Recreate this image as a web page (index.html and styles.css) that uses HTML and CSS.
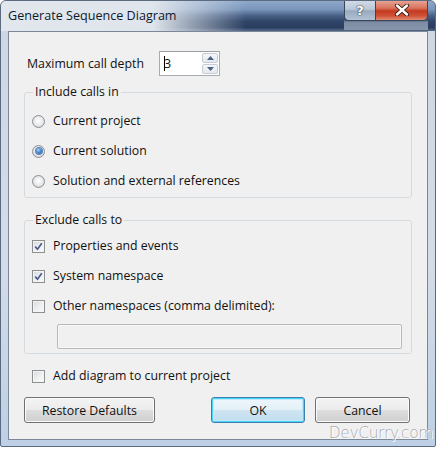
FILE: index.html
```html
<!DOCTYPE html>
<html lang="en">
<head>
<meta charset="utf-8">
<title>Generate Sequence Diagram</title>
<link rel="stylesheet" href="styles.css">
</head>
<body>
<div class="window">
  <div class="caption">
    <span class="title">Generate Sequence Diagram</span>
    <div class="caption-buttons">
      <span class="cap cap-help">?</span>
      <span class="cap cap-close">
        <svg width="16" height="12" viewBox="0 0 16 12">
          <path d="M3 1.5 L13 10.5 M13 1.5 L3 10.5" stroke="#3a1810" stroke-width="4.2" stroke-linecap="round"/>
          <path d="M3 1.5 L13 10.5 M13 1.5 L3 10.5" stroke="#ffffff" stroke-width="2.4" stroke-linecap="round"/>
        </svg>
      </span>
    </div>
  </div>
  <div class="client">
    <div class="depth-row">
      <span class="depth-label">Maximum call depth</span>
      <div class="spin">
        <span class="spin-value"><span class="caret"></span>3</span>
        <div class="spin-arrows">
          <span class="spin-btn"><svg width="7" height="4" viewBox="0 0 7 4"><path d="M0 4 L3.5 0 L7 4Z" fill="#4d6185"/></svg></span>
          <span class="spin-btn"><svg width="7" height="4" viewBox="0 0 7 4"><path d="M0 0 L3.5 4 L7 0Z" fill="#4d6185"/></svg></span>
        </div>
      </div>
    </div>

    <fieldset class="group group-include">
      <legend>Include calls in</legend>
      <div class="option"><span class="radio"></span><span>Current project</span></div>
      <div class="option"><span class="radio radio-on"></span><span>Current solution</span></div>
      <div class="option"><span class="radio"></span><span>Solution and external references</span></div>
    </fieldset>

    <fieldset class="group group-exclude">
      <legend>Exclude calls to</legend>
      <div class="option"><span class="check check-on"><svg width="9" height="9" viewBox="0 0 9 9"><path d="M1.2 4.6 L3.5 7.2 L7.8 1.2" fill="none" stroke="#4a5d8e" stroke-width="1.7"/></svg></span><span>Properties and events</span></div>
      <div class="option"><span class="check check-on"><svg width="9" height="9" viewBox="0 0 9 9"><path d="M1.2 4.6 L3.5 7.2 L7.8 1.2" fill="none" stroke="#4a5d8e" stroke-width="1.7"/></svg></span><span>System namespace</span></div>
      <div class="option"><span class="check"></span><span>Other namespaces (comma delimited):</span></div>
      <div class="namespaces-box"></div>
    </fieldset>

    <div class="option option-add"><span class="check"></span><span>Add diagram to current project</span></div>

    <div class="button-row">
      <span class="btn btn-restore">Restore Defaults</span>
      <span class="btn btn-default">OK</span>
      <span class="btn">Cancel</span>
    </div>
  </div>
  <span class="watermark">DevCurry.com</span>
</div>
</body>
</html>
```

FILE: styles.css
```css
* { box-sizing: border-box; }

html, body {
  margin: 0;
  padding: 0;
  background: #ffffff;
}

body {
  width: 438px;
  height: 449px;
  overflow: hidden;
  font-family: "Open Sans", "Noto Sans", sans-serif;
  font-size: 12.3px;
  color: #111111;
}

/* Aero glass frame */
.window {
  position: relative;
  width: 436px;
  height: 447px;
  border: 1px solid #5b6a7e;
  border-radius: 6px 6px 2px 2px;
  padding: 0 7px 6px 7px;
  display: flex;
  flex-direction: column;
  background: linear-gradient(#cdd6e1, #d3dce7 60%, #bdd0e6);
  overflow: hidden;
}

/* caption glass: light blue on top, deep navy towards its lower edge */
.caption {
  flex: none;
  height: 30px;
  margin: 0 -7px;
  padding-right: 7px;
  display: flex;
  justify-content: space-between;
  align-items: flex-start;
  background-color: #33496c;
  background-image: linear-gradient(#8ea8cb, #7a95bb 28%, #4b6388 48%, #2f4567 68%, #293d5e 88%, #56698a);
}

/* pale haze behind the caption text */
.title {
  width: 245px;
  height: 30px;
  padding: 6px 0 0 7px;
  font-size: 12.6px;
  color: #0c1a2c;
  background-image: linear-gradient(90deg, #e2e7ed, #dfe5ec 62%, rgba(223,229,236,0));
}

.caption-buttons {
  display: flex;
  height: 30px;
  margin-top: -1px;
  background-image: linear-gradient(rgba(0,0,0,0) 20px, #7d8ca3 22px, #8796ab);
}

.cap {
  height: 21px;
  display: flex;
  align-items: center;
  justify-content: center;
  border: 1px solid #3a4658;
  border-top: none;
}

.cap-help {
  width: 31px;
  border-radius: 0 0 0 5px;
  border-right: none;
  background: linear-gradient(#d3dce7, #bcc9d8 45%, #98aabf 55%, #b3c3d6);
  font-family: "DejaVu Sans", sans-serif;
  font-weight: bold;
  font-size: 13px;
  color: #ffffff;
  text-shadow: 0 0 2px #2b3546, 0 0 1px #2b3546;
}

.cap-close {
  width: 53px;
  border-radius: 0 0 5px 0;
  background: linear-gradient(#e9a99a, #d9735f 40%, #c4391f 55%, #d0533a 80%, #e08c72);
}

/* Dialog client area */
.client {
  position: relative;
  flex: 1;
  background: #f0f0f0;
  border: 1px solid #7c8797;
  padding: 19px 15px 0 15px;
  display: flex;
  flex-direction: column;
}

.depth-row {
  display: flex;
  align-items: center;
  height: 25px;
}

.depth-label {
  padding-left: 3px;
  width: 135px;
}

.spin {
  width: 61px;
  height: 25px;
  border: 1px solid #a8acb2;
  border-top-color: #9a9ea5;
  background: #ffffff;
  display: flex;
  justify-content: space-between;
  padding: 1px 1px 1px 2px;
}

.spin-value {
  position: relative;
  padding-left: 2px;
  line-height: 21px;
  font-size: 12.5px;
}

.caret {
  position: absolute;
  left: 2px;
  top: 3px;
  width: 1px;
  height: 15px;
  background: #000000;
}

.spin-arrows {
  width: 16px;
  display: flex;
  flex-direction: column;
  gap: 1px;
}

.spin-btn {
  flex: 1;
  display: flex;
  align-items: center;
  justify-content: center;
  border: 1px solid #c6ccd4;
  border-radius: 2px;
  background: linear-gradient(#f5f7f9, #e3e8ee);
}

/* Group boxes */
.group {
  margin: 0;
  padding: 0 7px 8px 7px;
  border: 1px solid #d4dbe0;
  border-radius: 3px;
  display: flex;
  flex-direction: column;
  gap: 14px;
}

.group legend {
  padding: 0 2px;
  margin-left: 1px;
  line-height: 16px;
}

.group-include {
  margin-top: 8px;
  padding-top: 13px;
}

.group-exclude {
  margin-top: 14px;
  padding-top: 10px;
  padding-bottom: 4px;
}

.option {
  display: flex;
  align-items: center;
  gap: 8px;
  height: 16px;
  line-height: 16px;
}

.radio {
  width: 13px;
  height: 13px;
  border-radius: 50%;
  border: 1px solid #8d8f93;
  background: radial-gradient(circle at 50% 45%, #ffffff 0%, #eef0f2 40%, #c8cbcf 100%);
  display: flex;
  align-items: center;
  justify-content: center;
  flex: none;
}

.radio-on::after {
  content: "";
  width: 6px;
  height: 6px;
  border-radius: 50%;
  background: radial-gradient(circle at 40% 35%, #9fd2f6 0%, #3a7ec7 55%, #1d4f8f 100%);
  box-shadow: 0 0 0 1px #5e83b0;
}

.check {
  width: 13px;
  height: 13px;
  border: 1px solid #8e8f8f;
  background: linear-gradient(135deg, #d5d8dc 0%, #eceef0 50%, #fbfbfb 100%);
  box-shadow: inset 0 0 0 1px #f4f4f4;
  display: flex;
  align-items: center;
  justify-content: center;
  flex: none;
}

.namespaces-box {
  margin: -4px 2px 0 25px;
  height: 25px;
  border: 1px solid #b7babd;
  border-radius: 2px;
  background: #f0f0f0;
  box-shadow: inset 0 0 0 1px #f7f7f7;
}

.option-add {
  margin: 14px 0 0 8px;
}

.button-row {
  display: flex;
  margin-top: 13px;
  padding-right: 2px;
}

.btn {
  height: 26px;
  width: 95px;
  display: flex;
  align-items: center;
  justify-content: center;
  border: 1px solid #707070;
  border-radius: 3px;
  background: linear-gradient(#f3f3f3, #ececec 48%, #dddddd 52%, #cfcfcf);
  box-shadow: inset 0 0 0 1px #fbfbfb;
  margin-left: 10px;
}

.btn-restore {
  width: 131px;
  margin-left: 0;
  margin-right: auto;
}

.btn-default {
  width: 94px;
  border-color: #3c7fb1;
  box-shadow: inset 0 0 0 1px #48d5f6, inset 0 0 0 2px #bfe9f8;
  background: linear-gradient(#eef6fb, #e3f0f8 48%, #cfe5f2 52%, #bfdcee);
}

.watermark {
  position: absolute;
  right: 2px;
  bottom: 4px;
  font-family: "DejaVu Sans", sans-serif;
  font-size: 15.5px;
  font-weight: 300;
  letter-spacing: -0.4px;
  color: #a4aab2;
  text-shadow: 0 0 1px #ffffff, 1px 1px 0 #ffffff;
}
```
